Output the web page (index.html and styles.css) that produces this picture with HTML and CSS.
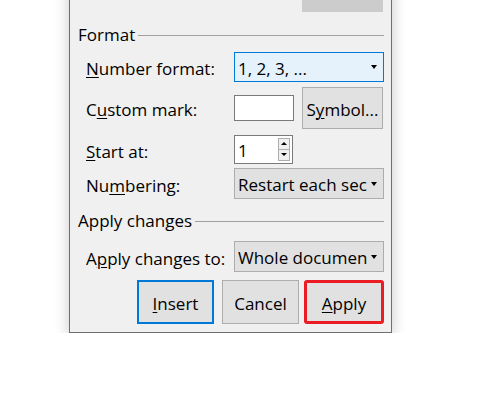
FILE: index.html
```html
<!DOCTYPE html>
<html lang="en">
<head>
  <meta charset="UTF-8">
  <meta name="viewport" content="width=device-width, initial-scale=1.0">
  <title>Footnote and Endnote</title>
  <link rel="stylesheet" href="styles.css">
</head>
<body>
  <!-- 对话框 -->
  <div class="dialog">
    <!-- 顶部（被裁掉的）按钮 -->
    <div class="top-row">
      <a href="javascript:;" class="btn btn-disabled"></a>
    </div>

    <!-- Format 分组 -->
    <div class="group-title"><span>Format</span><i></i></div>

    <div class="row row-select">
      <label><u>N</u>umber format:</label>
      <div class="select select-focus"><span class="val">1, 2, 3, ...</span><b class="arrow"></b></div>
    </div>

    <div class="row row-custom">
      <label>C<u>u</u>stom mark:</label>
      <div class="ctrl">
        <div class="textbox"></div>
        <a href="javascript:;" class="btn btn-symbol">S<u>y</u>mbol...</a>
      </div>
    </div>

    <div class="row row-start">
      <label><u>S</u>tart at:</label>
      <div class="spinner">
        <span class="val">1</span>
        <div class="spin">
          <span class="up"></span>
          <span class="down"></span>
        </div>
      </div>
    </div>

    <div class="row row-numbering">
      <label>Nu<u>m</u>bering:</label>
      <div class="select"><span class="val">Restart each sec</span><b class="arrow"></b></div>
    </div>

    <!-- Apply changes 分组 -->
    <div class="group-title group-apply"><span>Apply changes</span><i></i></div>

    <div class="row row-apply">
      <label>A<u>p</u>ply changes to:</label>
      <div class="select"><span class="val">Whole documen</span><b class="arrow"></b></div>
    </div>

    <!-- 底部按钮 -->
    <div class="actions">
      <a href="javascript:;" class="btn btn-default"><u>I</u>nsert</a>
      <a href="javascript:;" class="btn btn-cancel">Cancel</a>
      <a href="javascript:;" class="btn btn-apply"><u>A</u>pply</a>
    </div>
  </div>
</body>
</html>
```

FILE: styles.css
```css
/* 清除默认样式 */
* {
  margin: 0;
  padding: 0;
  box-sizing: border-box;
}
body {
  background-color: #fff;
  font: 17px "Open Sans", "Noto Sans", sans-serif;
  color: #000;
  overflow: hidden;
}
u {
  text-decoration: underline;
  text-underline-offset: 2px;
  text-decoration-thickness: 1px;
}
.dialog {
  width: 323px;
  margin: -30px 0 0 69px;
  padding: 11px 7px 8px 0;
  background-color: #f0f0f0;
  border: 1px solid #6f6f6f;
  box-shadow: 0 4px 14px rgba(0,0,0,0.22);
}
/* 按钮 */
.btn {
  display: flex;
  align-items: center;
  justify-content: center;
  background-color: #e1e1e1;
  border: 1px solid #adadad;
  color: #000;
  text-decoration: none;
  white-space: nowrap;
}
.top-row {
  display: flex;
  justify-content: flex-end;
  padding-right: 1px;
}
.btn-disabled {
  width: 81px;
  height: 30px;
  background-color: #cccccc;
  border-color: #cccccc;
}
/* 分组标题 */
.group-title {
  display: flex;
  align-items: center;
  height: 22px;
  margin-top: 12px;
  padding-left: 8px;
}
.group-title span {
  padding-right: 3px;
  line-height: 22px;
}
.group-title i {
  flex: 1;
  height: 1px;
  background-color: #a0a0a0;
}
.group-apply {
  margin-top: 11px;
}
/* 表单行 */
.row {
  display: grid;
  grid-template-columns: 148px 150px;
  align-items: center;
  padding-left: 16px;
}
.row label {
  padding-top: 3px;
  white-space: nowrap;
}
.row-select {
  height: 30px;
  margin-top: 6px;
}
.row-custom {
  height: 42px;
  margin-top: 5px;
}
.row-start {
  height: 29px;
  margin-top: 6px;
}
.row-numbering {
  height: 31px;
  margin-top: 4px;
}
.row-apply {
  height: 31px;
  margin-top: 9px;
}
/* 下拉框 */
.select {
  position: relative;
  display: flex;
  align-items: center;
  height: 100%;
  padding: 2px 16px 0 3px;
  background-color: #e1e1e1;
  border: 1px solid #adadad;
  overflow: hidden;
}
.select .val {
  white-space: nowrap;
  overflow: hidden;
}
.select-focus {
  background-color: #e5f1fb;
  border-color: #0078d7;
}
.arrow {
  position: absolute;
  right: 6px;
  top: 50%;
  margin-top: -2px;
  width: 0;
  height: 0;
  border-left: 3.5px solid transparent;
  border-right: 3.5px solid transparent;
  border-top: 4px solid #000;
}
/* 自定义标记 */
.ctrl {
  display: flex;
  align-items: center;
  height: 100%;
}
.textbox {
  width: 60px;
  height: 26px;
  margin-right: 8px;
  background-color: #fff;
  border: 1px solid #7a7a7a;
}
.btn-symbol {
  width: 81px;
  height: 42px;
  padding-top: 2px;
}
/* 微调框 */
.spinner {
  display: flex;
  align-items: center;
  width: 59px;
  height: 29px;
  padding-left: 3px;
  background-color: #fff;
  border: 1px solid #7a7a7a;
}
.spinner .val {
  flex: 1;
  padding-top: 2px;
}
.spin {
  display: flex;
  flex-direction: column;
  width: 12px;
  height: 23px;
  margin-right: 2px;
}
.spin span {
  position: relative;
  flex: 1;
  background-color: #f0f0f0;
  border: 1px solid #adadad;
}
.spin .down {
  border-top: none;
}
.spin span::after {
  content: "";
  position: absolute;
  left: 50%;
  top: 50%;
  margin: -2px 0 0 -3px;
  border-left: 3px solid transparent;
  border-right: 3px solid transparent;
}
.spin .up::after {
  border-bottom: 3px solid #000;
}
.spin .down::after {
  border-top: 3px solid #000;
}
/* 底部按钮 */
.actions {
  display: flex;
  justify-content: flex-end;
  height: 44px;
  margin-top: 8px;
}
.actions .btn {
  height: 44px;
  padding-top: 2px;
}
.btn-default {
  width: 77px;
  border: 2px solid #0078d7;
}
.btn-cancel {
  width: 77px;
  margin-left: 8px;
}
.btn-apply {
  width: 80px;
  margin-left: 5px;
  border: 3px solid #ec1c24;
  border-radius: 3px;
}
```
